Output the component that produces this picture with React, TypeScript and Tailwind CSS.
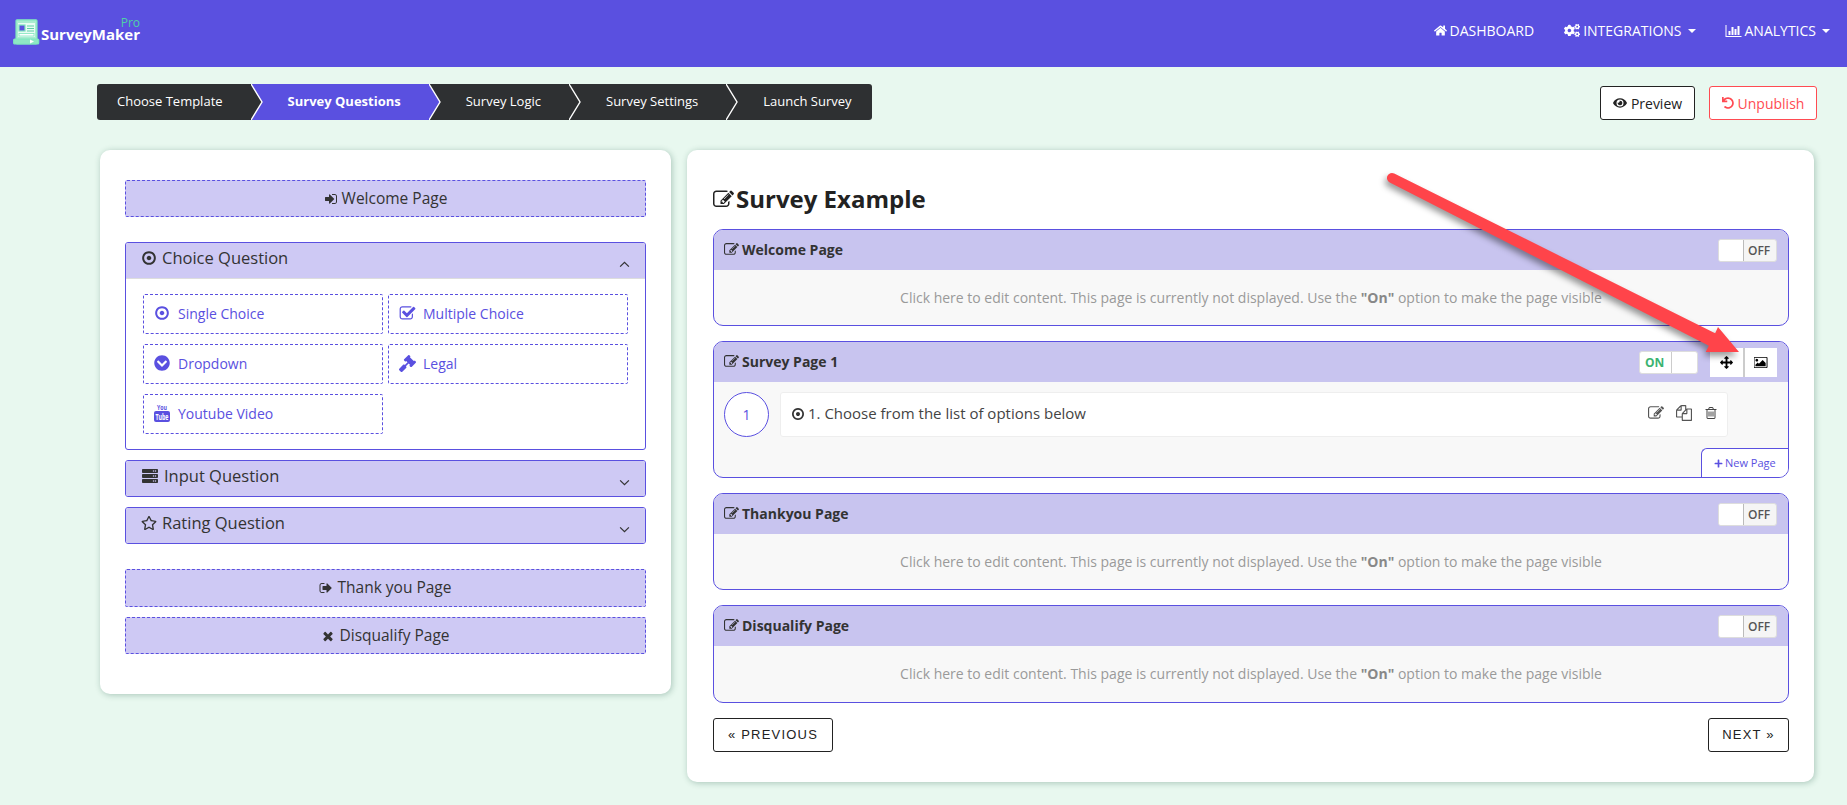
import React from "react";
import {
  FaHome, FaCogs, FaEye, FaUndo, FaChevronCircleDown, FaGavel, FaServer, FaRegStar, FaPlus,
} from "react-icons/fa";

const P: Record<string, string> = {
  edit: "M888 1184l116-116-152-152-116 116v56h96v96h56zm440-720q-16-16-33 1l-350 350q-17 17-1 33t33-1l350-350q17-17 1-33zm80 594v190q0 119-84.5 203.5t-203.5 84.5h-832q-119 0-203.5-84.5t-84.5-203.5v-832q0-119 84.5-203.5t203.5-84.5h832q63 0 117 25 15 7 18 23 3 17-9 29l-49 49q-14 14-32 8-23-6-45-6h-832q-66 0-113 47t-47 113v832q0 66 47 113t113 47h832q66 0 113-47t47-113v-126q0-13 9-22l64-64q15-15 35-7t20 29zm-96-738l288 288-672 672h-288v-288zm444 132l-92 92-288-288 92-92q28-28 68-28t68 28l152 152q28 28 28 68t-28 68z",
  signin: "M1312 896q0 26-19 45l-544 544q-19 19-45 19t-45-19-19-45v-288h-448q-26 0-45-19t-19-45v-384q0-26 19-45t45-19h448v-288q0-26 19-45t45-19 45 19l544 544q19 19 19 45zm352-352v704q0 119-84.5 203.5t-203.5 84.5h-320q-13 0-22.5-9.5t-9.5-22.5q0-4-1-20t-.5-26.5 3-23.5 10-19.5 20.5-6.5h320q66 0 113-47t47-113v-704q0-66-47-113t-113-47h-312l-11.5-1-11.5-3-8-5.5-7-9-2-13.5q0-4-1-20t-.5-26.5 3-23.5 10-19.5 20.5-6.5h320q119 0 203.5 84.5t84.5 203.5z",
  signout: "M704 1440q0 4 1 20t.5 26.5-3 23.5-10 19.5-20.5 6.5h-320q-119 0-203.5-84.5t-84.5-203.5v-704q0-119 84.5-203.5t203.5-84.5h320q13 0 22.5 9.5t9.5 22.5q0 4 1 20t.5 26.5-3 23.5-10 19.5-20.5 6.5h-320q-66 0-113 47t-47 113v704q0 66 47 113t113 47h312l11.5 1 11.5 3 8 5.5 7 9 2 13.5zm928-544q0 26-19 45l-544 544q-19 19-45 19t-45-19-19-45v-288h-448q-26 0-45-19t-19-45v-384q0-26 19-45t45-19h448v-288q0-26 19-45t45-19 45 19l544 544q19 19 19 45z",
  times: "M1490 1322q0 40-28 68l-136 136q-28 28-68 28t-68-28l-294-294-294 294q-28 28-68 28t-68-28l-136-136q-28-28-28-68t28-68l294-294-294-294q-28-28-28-68t28-68l136-136q28-28 68-28t68 28l294 294 294-294q28-28 68-28t68 28l136 136q28 28 28 68t-28 68l-294 294 294 294q28 28 28 68z",
  dot: "M1152 896q0 106-75 181t-181 75-181-75-75-181 75-181 181-75 181 75 75 181zm-256-544q-148 0-273 73t-198 198-73 273 73 273 198 198 273 73 273-73 198-198 73-273-73-273-198-198-273-73zm768 544q0 209-103 385.5t-279.5 279.5-385.5 103-385.5-103-279.5-279.5-103-385.5 103-385.5 279.5-279.5 385.5-103 385.5 103 279.5 279.5 103 385.5z",
  check: "M1472 930v318q0 119-84.5 203.5t-203.5 84.5h-832q-119 0-203.5-84.5t-84.5-203.5v-832q0-119 84.5-203.5t203.5-84.5h832q63 0 117 25 15 7 18 23 3 17-9 29l-49 49q-10 10-23 10-3 0-9-2-23-6-45-6h-832q-66 0-113 47t-47 113v832q0 66 47 113t113 47h832q66 0 113-47t47-113v-254q0-13 9-22l64-64q10-10 23-10 6 0 12 3 20 8 20 29zm231-489l-814 814q-24 24-57 24t-57-24l-430-430q-24-24-24-57t24-57l110-110q24-24 57-24t57 24l263 263 647-647q24-24 57-24t57 24l110 110q24 24 24 57t-24 57z",
  arrows: "M1792 896q0 26-19 45l-256 256q-19 19-45 19t-45-19-19-45v-128h-384v384h128q26 0 45 19t19 45-19 45l-256 256q-19 19-45 19t-45-19l-256-256q-19-19-19-45t19-45 45-19h128v-384h-384v128q0 26-19 45t-45 19-45-19l-256-256q-19-19-19-45t19-45l256-256q19-19 45-19t45 19 19 45v128h384v-384h-128q-26 0-45-19t-19-45 19-45l256-256q19-19 45-19t45 19l256 256q19 19 19 45t-19 45-45 19h-128v384h384v-128q0-26 19-45t45-19 45 19l256 256q19 19 19 45z",
  files: "M1696 384q40 0 68 28t28 68v1216q0 40-28 68t-68 28h-960q-40 0-68-28t-28-68v-288h-544q-40 0-68-28t-28-68v-672q0-40 20-88t48-76l408-408q28-28 76-48t88-20h416q40 0 68 28t28 68v328q68-40 128-40h416zm-544 213l-299 299h299v-299zm-640-384l-299 299h299v-299zm196 647l316-316v-416h-384v416q0 40-28 68t-68 28h-416v640h512v-256q0-40 20-88t48-76zm956 804v-1152h-384v416q0 40-28 68t-68 28h-416v640h896z",
  trash: "M704 736v576q0 14-9 23t-23 9h-64q-14 0-23-9t-9-23v-576q0-14 9-23t23-9h64q14 0 23 9t9 23zm256 0v576q0 14-9 23t-23 9h-64q-14 0-23-9t-9-23v-576q0-14 9-23t23-9h64q14 0 23 9t9 23zm256 0v576q0 14-9 23t-23 9h-64q-14 0-23-9t-9-23v-576q0-14 9-23t23-9h64q14 0 23 9t9 23zm128 724v-948h-896v948q0 22 7 40.5t14.5 27 10.5 8.5h832q3 0 10.5-8.5t14.5-27 7-40.5zm-672-1076h448l-48-117q-7-9-17-11h-317q-10 2-17 11zm928 32v64q0 14-9 23t-23 9h-96v948q0 83-47 143.5t-113 60.5h-832q-66 0-113-59t-47-142v-952h-96q-14 0-23-9t-9-23v-64q0-14 9-23t23-9h309l70-167q15-37 54-63t79-26h320q40 0 79 26t54 63l70 167h309q14 0 23 9t9 23z",
};

function FA({ n, className }: { n: string; className?: string }) {
  return (
    <svg viewBox="0 0 1792 1792" fill="currentColor" className={className}>
      <path d={P[n]} />
    </svg>
  );
}

function BarChart({ className }: { className?: string }) {
  return (
    <svg viewBox="0 0 2048 1792" fill="currentColor" className={className}>
      <path d="M640 896v512h-256v-512h256zm384-512v1024h-256v-1024h256zm1024 1152v128h-2048v-1536h128v1408h1920zm-640-896v768h-256v-768h256zm384-384v1152h-256v-1152h256z" />
    </svg>
  );
}

function Picture({ className }: { className?: string }) {
  return (
    <svg viewBox="0 0 1920 1792" fill="currentColor" className={className}>
      <path d="M576 576q0 80-56 136t-136 56-136-56-56-136 56-136 136-56 136 56 56 136zm1024 384v448h-1408v-192l320-320 160 160 512-512zm96-704h-1600q-13 0-22.5 9.5t-9.5 22.5v1216q0 13 9.5 22.5t22.5 9.5h1600q13 0 22.5-9.5t9.5-22.5v-1216q0-13-9.5-22.5t-22.5-9.5zm160 32v1216q0 66-47 113t-113 47h-1600q-66 0-113-47t-47-113v-1216q0-66 47-113t113-47h1600q66 0 113 47t47 113z" />
    </svg>
  );
}

function YouTube() {
  return (
    <svg viewBox="0 0 16 18" className="h-[18px] w-[16px]" fill="currentColor">
      <text x="3" y="6" fontSize="7" fontWeight="700" textLength="10" lengthAdjust="spacingAndGlyphs" fontFamily="Open Sans, sans-serif">You</text>
      <rect x="0" y="7" width="16" height="11" rx="2" />
      <text x="1.5" y="15.5" fontSize="8" fontWeight="700" fill="#fff" textLength="13" lengthAdjust="spacingAndGlyphs" fontFamily="Open Sans, sans-serif">Tube</text>
    </svg>
  );
}

function Caret() {
  return <span className="ml-[3px] inline-block h-0 w-0 border-x-[4px] border-t-[4px] border-x-transparent border-t-white" />;
}

function Logo() {
  return (
    <svg viewBox="0 0 27 27" className="h-[27px] w-[27px]" fill="none" stroke="#7ee6bd" strokeWidth="1.2">
      <rect x="3" y="0.8" width="21" height="24" rx="1" fill="#a9ecd0" />
      <rect x="5" y="4" width="17" height="14" fill="#e8fbf3" stroke="none" />
      <rect x="6" y="6" width="6" height="6" fill="#5a50e0" stroke="#7ee6bd" />
      <path d="M14 7h7M14 9.5h7M14 12h7" stroke="#5fcfa5" strokeWidth="1" />
      <rect x="6" y="14.5" width="15" height="2.5" fill="#fff" stroke="#7ee6bd" strokeWidth="0.8" />
      <rect x="0.7" y="20" width="25" height="5" rx="1" fill="#8fe8c4" />
      <path d="M17 20.5v4l4-2z" fill="#fff" stroke="none" />
    </svg>
  );
}

function Step({ label, active, first, last }: { label: string; active?: boolean; first?: boolean; last?: boolean }) {
  const fill = active ? "#5a50e0" : "#2e3032";
  return (
    <div
      className={`relative flex h-9 items-center text-[13px] text-white ${first ? "rounded-l-[3px] pl-5" : "pl-[36px]"} ${last ? "rounded-r-[3px] pr-5" : "pr-[29px]"} ${active ? "bg-[#5a50e0] font-bold" : "bg-[#2e3032]"}`}
    >
      {label}
      {!last && (
        <svg viewBox="0 0 12 36" className="absolute -right-[11px] top-0 z-10 h-9 w-[12px]">
          <polygon points="0,0 11,18 0,36" fill={fill} />
          <polyline points="0,0 11,18 0,36" fill="none" stroke="#fff" strokeWidth="1.4" />
        </svg>
      )}
    </div>
  );
}

function DashedBar({ icon, label, className }: { icon: React.ReactNode; label: string; className?: string }) {
  return (
    <div className={`flex h-[37px] items-center justify-center gap-[4px] rounded-[2px] border border-dashed border-[#5a50e0] bg-[#cec9f4] text-[15.5px] text-[#333] ${className ?? ""}`}>
      {icon}
      {label}
    </div>
  );
}

function Chevron({ up }: { up?: boolean }) {
  return (
    <svg viewBox="0 0 12 8" className="mt-[15px] h-[7px] w-[11px]" fill="none" stroke="#333" strokeWidth="1.4">
      <path d={up ? "M1 6.5 6 1.5l5 5" : "M1 1.5l5 5 5-5"} />
    </svg>
  );
}

function AccHeader({ icon, label, up, className }: { icon: React.ReactNode; label: string; up?: boolean; className?: string }) {
  return (
    <div className={`flex items-start justify-between bg-[#cec9f4] pl-[15px] pr-[15px] pt-[3px] ${className ?? ""}`}>
      <div className="flex items-center gap-[5px] text-[16.5px] leading-[24px] text-[#333]">
        {icon}
        {label}
      </div>
      <Chevron up={up} />
    </div>
  );
}

function Choice({ icon, label }: { icon: React.ReactNode; label: string }) {
  return (
    <div className="flex h-10 items-center rounded-[2px] border border-dashed border-[#5a50e0] pb-[2px] pl-[10px] text-[14px] text-[#5a50e0]">
      <span className="flex w-[24px] shrink-0 items-center">{icon}</span>
      {label}
    </div>
  );
}

function Off() {
  return (
    <div className="flex h-[23px] w-[59px] overflow-hidden rounded-[3px] border border-[#ddd] bg-[#f5f5f5] text-[12px] font-semibold leading-[21px] text-[#555]">
      <span className="w-[25px] border-r border-[#bbb] bg-white" />
      <span className="pl-[4px]">OFF</span>
    </div>
  );
}

function PanelHead({ label, children }: { label: string; children?: React.ReactNode }) {
  return (
    <div className="flex h-[40px] items-center justify-between bg-[#c8c4ef] pl-[10px] pr-[11px]">
      <div className="mt-[-2px] flex items-center gap-[3px] text-[14px] font-bold text-[#333]">
        <FA n="edit" className="h-[15px] w-[15px]" />
        {label}
      </div>
      {children}
    </div>
  );
}

function HiddenPanel({ label, className }: { label: string; className: string }) {
  return (
    <div className={`overflow-hidden rounded-[10px] border border-[#5a50e0] bg-[#f8f8f8] ${className}`}>
      <PanelHead label={label}>
        <Off />
      </PanelHead>
      <div className="pt-[17px] text-center text-[14px] leading-[22px] text-[#9a9a9a]">
        Click here to edit content. This page is currently not displayed. Use the <b className="font-bold text-[#888]">"On"</b> option to make the page visible
      </div>
    </div>
  );
}

export default function App() {
  return (
    <div className="relative h-[805px] w-full overflow-hidden bg-[#e8f8ef] [font-family:'Open_Sans',sans-serif]">
      <header className="flex h-[67px] items-center justify-between bg-[#5a50e0] pl-[13px] pr-[17px] text-[14px] text-white">
        <div className="mt-[-3px] flex items-center gap-[1px]">
          <Logo />
          <div className="relative mt-[4px] text-[15px] font-bold leading-[14px]">
            SurveyMaker
            <span className="absolute -top-[8px] right-0 text-[12px] font-normal leading-[8px] text-[#4fd1a5]">Pro</span>
          </div>
        </div>
        <nav className="mt-[-6px] flex items-center">
          <span className="flex items-center gap-[3px]"><FaHome className="h-[13px] w-[13px]" />DASHBOARD</span>
          <span className="ml-[30px] flex items-center gap-[3px]"><FaCogs className="h-[15px] w-[16px]" />INTEGRATIONS<Caret /></span>
          <span className="ml-[29px] flex items-center gap-[3px]"><BarChart className="h-[14px] w-[17px]" />ANALYTICS<Caret /></span>
        </nav>
      </header>

      <div className="mt-[17px] flex items-start justify-between pl-[97px] pr-[30px]">
        <div className="flex">
          <Step label="Choose Template" first />
          <Step label="Survey Questions" active />
          <Step label="Survey Logic" />
          <Step label="Survey Settings" />
          <Step label="Launch Survey" last />
        </div>
        <div className="mt-[2px] flex gap-[14px] text-[14px]">
          <button className="flex h-[34px] w-[95px] items-center justify-center gap-[4px] rounded-[3px] border border-[#222] bg-white text-[#222]">
            <FaEye className="h-[14px] w-[14px]" />Preview
          </button>
          <button className="flex h-[34px] w-[108px] items-center justify-center gap-[4px] rounded-[3px] border border-[#ff4b52] bg-white text-[#ff4b52]">
            <FaUndo className="h-[12px] w-[12px]" />Unpublish
          </button>
        </div>
      </div>

      <main className="mt-[30px] flex items-start gap-[16px] pl-[100px] pr-[33px]">
        <section className="h-[544px] w-[571px] shrink-0 rounded-[10px] bg-white px-[25px] pt-[30px] shadow-[1px_1px_6px_rgba(20,80,60,0.3)]">
          <DashedBar icon={<FA n="signin" className="h-[14px] w-[14px]" />} label="Welcome Page" />

          <div className="mt-[25px] overflow-hidden rounded-[3px] border border-[#5a50e0]">
            <AccHeader up label="Choice Question" icon={<FA n="dot" className="h-[16px] w-[16px]" />} className="h-[36px] border-b border-[#ddd]" />
            <div className="grid h-[170px] grid-cols-[240px_240px] content-start gap-x-[5px] gap-y-[10px] pl-[17px] pt-[15px]">
              <Choice label="Single Choice" icon={<FA n="dot" className="h-[16px] w-[16px]" />} />
              <Choice label="Multiple Choice" icon={<FA n="check" className="h-[17px] w-[17px]" />} />
              <Choice label="Dropdown" icon={<FaChevronCircleDown className="h-[16px] w-[16px]" />} />
              <Choice label="Legal" icon={<FaGavel className="h-[17px] w-[17px]" />} />
              <Choice label="Youtube Video" icon={<YouTube />} />
            </div>
          </div>

          <div className="mt-[10px] overflow-hidden rounded-[3px] border border-[#5a50e0]">
            <AccHeader label="Input Question" icon={<FaServer className="h-[16px] w-[18px]" />} className="h-[35px]" />
          </div>
          <div className="mt-[10px] overflow-hidden rounded-[3px] border border-[#5a50e0]">
            <AccHeader label="Rating Question" icon={<FaRegStar className="h-[16px] w-[16px]" />} className="h-[35px]" />
          </div>

          <DashedBar className="mt-[25px] !h-[38px]" icon={<FA n="signout" className="h-[14px] w-[14px]" />} label="Thank you Page" />
          <DashedBar className="mt-[10px]" icon={<FA n="times" className="h-[14px] w-[14px]" />} label="Disqualify Page" />
        </section>

        <section className="h-[632px] w-[1127px] shrink-0 rounded-[10px] bg-white pl-[26px] pr-[25px] shadow-[1px_1px_6px_rgba(20,80,60,0.3)]">
          <h1 className="flex h-[79px] items-center gap-[2px] pt-[19px] text-[24px] font-bold text-[#222]">
            <FA n="edit" className="h-[21px] w-[21px]" />
            Survey Example
          </h1>

          <HiddenPanel label="Welcome Page" className="h-[97px]" />

          <div className="relative mt-[15px] h-[137px] overflow-hidden rounded-[10px] border border-[#5a50e0] bg-[#f8f8f8]">
            <PanelHead label="Survey Page 1">
              <div className="flex items-center">
                <div className="flex h-[23px] w-[59px] overflow-hidden rounded-[3px] border border-[#ddd] bg-white text-[12px] font-bold leading-[21px] text-[#3cb371]">
                  <span className="w-[32px] border-r border-[#ccc] pl-[5px]">ON</span>
                </div>
                <div className="ml-[12px] flex h-[29px] w-[67px] items-stretch bg-white text-black">
                  <span className="flex flex-1 items-center justify-center border-r-2 border-[#ccc]"><FA n="arrows" className="h-[13px] w-[13px]" /></span>
                  <span className="flex flex-1 items-center justify-center"><Picture className="h-[13px] w-[14px]" /></span>
                </div>
              </div>
            </PanelHead>
            <div className="flex gap-[11px] pl-[10px] pt-[10px]">
              <div className="flex h-[45px] w-[45px] shrink-0 items-center justify-center rounded-full border border-[#5a50e0] bg-white text-[14px] text-[#5a50e0]">1</div>
              <div className="flex h-[45px] w-[948px] items-center justify-between rounded-[3px] border border-[#eee] bg-white pl-[10px] pr-[9px] text-[15px] text-[#444]">
                <div className="mt-[-2px] flex items-center gap-[3px]">
                  <FA n="dot" className="h-[14px] w-[14px] text-[#333]" />
                  1. Choose from the list of options below
                </div>
                <div className="mt-[-3px] flex items-center gap-[12px] text-[#555]">
                  <FA n="edit" className="h-[16px] w-[16px]" />
                  <FA n="files" className="h-[16px] w-[16px]" />
                  <FA n="trash" className="h-[14px] w-[14px] text-[#444]" />
                </div>
              </div>
            </div>
            <div className="absolute bottom-0 right-0 flex h-[29px] w-[87px] items-center gap-[2px] rounded-tl-[6px] border-l border-t border-[#5a50e0] bg-white pl-[12px] text-[11px] text-[#5a50e0]">
              <FaPlus className="h-[9px] w-[9px]" />
              New Page
            </div>
          </div>

          <HiddenPanel label="Thankyou Page" className="mt-[15px] h-[97px]" />
          <HiddenPanel label="Disqualify Page" className="mt-[15px] h-[98px]" />

          <div className="mt-[15px] flex justify-between [font-family:'Liberation_Sans',sans-serif] text-[13px] tracking-[1.2px] text-[#222]">
            <button className="h-[34px] w-[120px] rounded-[3px] border border-[#222] bg-white">« PREVIOUS</button>
            <button className="h-[34px] w-[81px] rounded-[3px] border border-[#222] bg-white">NEXT »</button>
          </div>
        </section>
      </main>

      <svg viewBox="0 0 1847 805" className="pointer-events-none absolute left-0 top-0 z-20 h-[805px] w-[1847px] drop-shadow-[-2px_4px_3px_rgba(0,0,0,0.4)]">
        <path d="M1394.25 173.5L1715.15 333.25L1718 327L1739 352L1705.7 352L1708.85 345.75L1389.75 182.5A5 5 0 0 1 1394.25 173.5Z" fill="#ff444a" />
      </svg>
    </div>
  );
}
